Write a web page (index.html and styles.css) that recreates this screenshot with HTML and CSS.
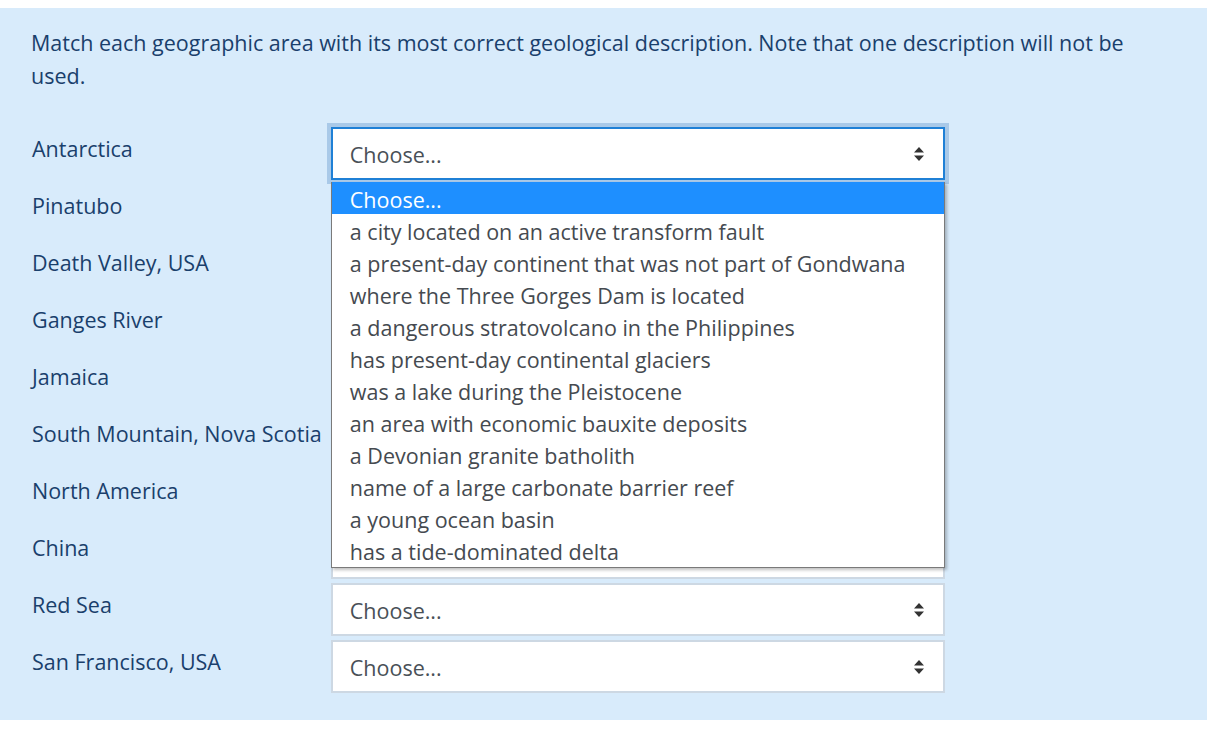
FILE: index.html
```html
<!DOCTYPE html>
<html lang="en">
<head>
<meta charset="utf-8">
<title>Matching question</title>
<link rel="stylesheet" href="styles.css">
</head>
<body>
<div class="que">
  <p class="qtext">Match each geographic area with its most correct geological description. Note that one description will not be used.</p>
  <div class="answers">
    <div class="label">Antarctica</div>
    <div class="cell">
      <div class="select focused"><span>Choose...</span><svg class="arrow" viewBox="0 0 12 16" width="12" height="16"><path d="M6 1 L11 6.5 H1 Z M6 15 L11 9.5 H1 Z" fill="#333"/></svg></div>
      <ul class="dropdown">
        <li class="active">Choose...</li>
        <li>a city located on an active transform fault</li>
        <li>a present-day continent that was not part of Gondwana</li>
        <li>where the Three Gorges Dam is located</li>
        <li>a dangerous stratovolcano in the Philippines</li>
        <li>has present-day continental glaciers</li>
        <li>was a lake during the Pleistocene</li>
        <li>an area with economic bauxite deposits</li>
        <li>a Devonian granite batholith</li>
        <li>name of a large carbonate barrier reef</li>
        <li>a young ocean basin</li>
        <li>has a tide-dominated delta</li>
      </ul>
    </div>
    <div class="label">Pinatubo</div>
    <div class="cell"><div class="select covered"><span>Choose...</span><svg class="arrow" viewBox="0 0 12 16" width="12" height="16"><path d="M6 1 L11 6.5 H1 Z M6 15 L11 9.5 H1 Z" fill="#333"/></svg></div></div>
    <div class="label">Death Valley, USA</div>
    <div class="cell"><div class="select covered"><span>Choose...</span><svg class="arrow" viewBox="0 0 12 16" width="12" height="16"><path d="M6 1 L11 6.5 H1 Z M6 15 L11 9.5 H1 Z" fill="#333"/></svg></div></div>
    <div class="label">Ganges River</div>
    <div class="cell"><div class="select covered"><span>Choose...</span><svg class="arrow" viewBox="0 0 12 16" width="12" height="16"><path d="M6 1 L11 6.5 H1 Z M6 15 L11 9.5 H1 Z" fill="#333"/></svg></div></div>
    <div class="label">Jamaica</div>
    <div class="cell"><div class="select covered"><span>Choose...</span><svg class="arrow" viewBox="0 0 12 16" width="12" height="16"><path d="M6 1 L11 6.5 H1 Z M6 15 L11 9.5 H1 Z" fill="#333"/></svg></div></div>
    <div class="label">South Mountain, Nova Scotia</div>
    <div class="cell"><div class="select covered"><span>Choose...</span><svg class="arrow" viewBox="0 0 12 16" width="12" height="16"><path d="M6 1 L11 6.5 H1 Z M6 15 L11 9.5 H1 Z" fill="#333"/></svg></div></div>
    <div class="label">North America</div>
    <div class="cell"><div class="select covered"><span>Choose...</span><svg class="arrow" viewBox="0 0 12 16" width="12" height="16"><path d="M6 1 L11 6.5 H1 Z M6 15 L11 9.5 H1 Z" fill="#333"/></svg></div></div>
    <div class="label">China</div>
    <div class="cell"><div class="select covered"><span>Choose...</span><svg class="arrow" viewBox="0 0 12 16" width="12" height="16"><path d="M6 1 L11 6.5 H1 Z M6 15 L11 9.5 H1 Z" fill="#333"/></svg></div></div>
    <div class="label">Red Sea</div>
    <div class="cell"><div class="select"><span>Choose...</span><svg class="arrow" viewBox="0 0 12 16" width="12" height="16"><path d="M6 1 L11 6.5 H1 Z M6 15 L11 9.5 H1 Z" fill="#333"/></svg></div></div>
    <div class="label">San Francisco, USA</div>
    <div class="cell"><div class="select"><span>Choose...</span><svg class="arrow" viewBox="0 0 12 16" width="12" height="16"><path d="M6 1 L11 6.5 H1 Z M6 15 L11 9.5 H1 Z" fill="#333"/></svg></div></div>
  </div>
</div>
</body>
</html>
```
FILE: styles.css
```css
html, body {
  margin: 0;
  padding: 0;
  background: #ffffff;
}
body {
  font-family: "Open Sans", "Noto Sans", sans-serif;
  font-size: 21.5px;
}
.que {
  margin: 8px 10px 0 0;
  height: 712px;
  box-sizing: border-box;
  background: #d8ebfb;
  color: #1a3f6c;
  padding: 18px 40px 0 31px;
}
.qtext {
  margin: 0;
  line-height: 33px;
}
.answers {
  margin-top: 35px;
  display: grid;
  grid-template-columns: max-content 614px;
  justify-content: start;
  grid-auto-rows: 57px;
  column-gap: 9px;
  align-items: start;
}
.label {
  padding-top: 8px;
  line-height: 28px;
  padding-left: 1px;
}
.cell {
  position: relative;
}
.select {
  box-sizing: border-box;
  height: 53px;
  background: #ffffff;
  border: 2px solid #cdd8e3;
  display: flex;
  align-items: center;
  justify-content: space-between;
  padding: 1px 18px 0 17px;
  color: #495057;
}
.select.covered span,
.select.covered .arrow {
  visibility: hidden;
}
.select.focused {
  border-color: #1f80d6;
  box-shadow: 0 0 0 4px #a9c9e8;
}
.arrow {
  display: block;
}
.dropdown {
  position: absolute;
  top: 55px;
  left: 0;
  width: 614px;
  box-sizing: border-box;
  margin: 0;
  padding: 0 0 1px;
  list-style: none;
  background: #ffffff;
  border: 1px solid #7a7a7a;
  border-top: none;
  box-shadow: 2px 2px 3px rgba(0, 0, 0, 0.25);
  z-index: 5;
}
.dropdown li {
  box-sizing: border-box;
  height: 32px;
  line-height: 32px;
  padding: 2px 0 0 18px;
  color: #454a50;
  white-space: nowrap;
}
.dropdown li.active {
  background: #1e8fff;
  color: #ffffff;
}
```
